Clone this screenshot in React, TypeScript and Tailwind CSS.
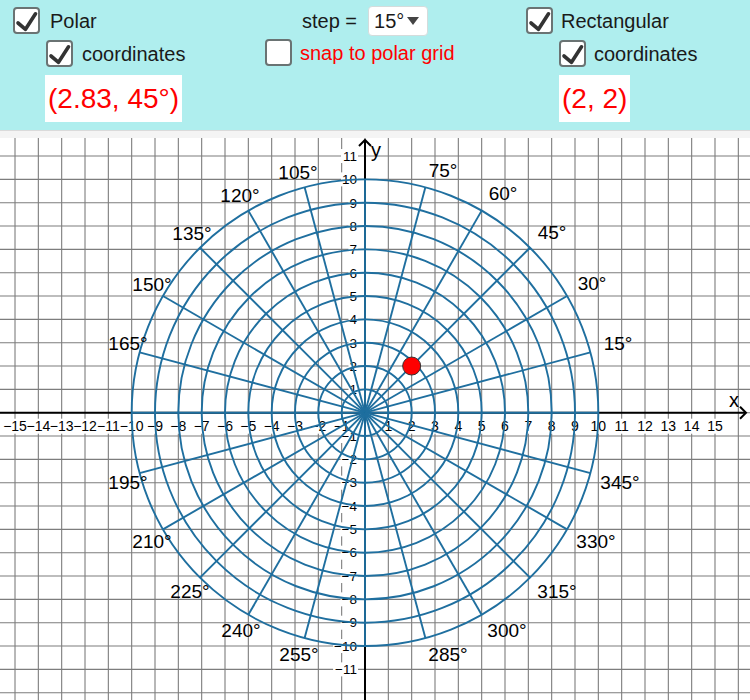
import React from 'react';

const OX = 365;
const OY = 274.7;
const U = 23.333;
const BLUE = '#1f6f9f';

const angleLabels: [string, number, number][] = [
    ['15°', 618, 343],
    ['30°', 592, 283],
    ['45°', 552, 232],
    ['60°', 503, 193],
    ['75°', 443, 170],
    ['105°', 298, 172],
    ['120°', 240, 195],
    ['135°', 192, 233],
    ['150°', 152, 284],
    ['165°', 128, 343],
    ['195°', 128, 482],
    ['210°', 152, 541],
    ['225°', 190, 591],
    ['240°', 241, 630],
    ['255°', 299, 654],
    ['285°', 448, 654],
    ['300°', 507, 630],
    ['315°', 557, 591],
    ['330°', 596, 541],
    ['345°', 620, 482]
];

function range(a: number, b: number) {
    const out: number[] = [];
    for (let i = a; i <= b; i++) out.push(i);
    return out;
}

function numLabel(k: number) {
    return k < 0 ? `\u2212${-k}` : `${k}`;
}

function labelWidth(k: number, size: number) {
    const digits = String(Math.abs(k)).length;
    return (digits * 0.556 + (k < 0 ? 0.584 : 0)) * size;
}

function Checkbox({ checked }: { checked: boolean }) {
    return (
        <span className="flex h-[27px] w-[27px] shrink-0 items-center justify-center rounded-[4px] border-2 border-[#6a7373] bg-white">
            {checked ? (
                <svg width="23" height="23" viewBox="0 0 23 23">
                    <path d="M3 14 L10.5 20.3 L20.5 4.8" fill="none" stroke="#333" strokeWidth={3.6} strokeLinecap="round" strokeLinejoin="round" />
                </svg>
            ) : null}
        </span>
    );
}

function Graph() {
    const xs = range(-16, 16);
    const ys = range(-12, 12);
    const xTicks = range(-15, 15).filter((k) => k !== 0);
    const yTicks = range(-11, 11).filter((k) => k !== 0);
    return (
        <svg width="750" height="562" className="block">
            <rect x="0" y="0" width="750" height="562" fill="#fff" />
            {xs.map((k) => (
                <line key={`gx${k}`} x1={OX + k * U} y1={0} x2={OX + k * U} y2={562} stroke="#7d7d7d" strokeWidth={1.1} />
            ))}
            {ys.map((k) => (
                <line key={`gy${k}`} x1={0} y1={OY - k * U} x2={750} y2={OY - k * U} stroke="#7d7d7d" strokeWidth={1.1} />
            ))}
            {xTicks.map((k) => {
                const w = labelWidth(k, 14);
                return <rect key={`bx${k}`} x={OX + k * U - w / 2 - 1} y={OY + 6} width={w + 2} height={15} fill="#fff" />;
            })}
            {yTicks.map((k) => {
                const w = labelWidth(k, 13.5);
                return <rect key={`by${k}`} x={OX - 8 - w - 1} y={OY - k * U - 7} width={w + 2} height={14} fill="#fff" />;
            })}

            <line x1={0} y1={OY} x2={746} y2={OY} stroke="#000" strokeWidth={2} />
            <path d={`M740 ${OY - 6} L746 ${OY} L740 ${OY + 6}`} fill="none" stroke="#000" strokeWidth={2} />
            <line x1={OX} y1={562} x2={OX} y2={2} stroke="#000" strokeWidth={2} />
            <path d={`M${OX - 6} 8 L${OX} 2 L${OX + 6} 8`} fill="none" stroke="#000" strokeWidth={2} />

            {xTicks.map((k) => (
                <text key={`tx${k}`} x={OX + k * U} y={OY + 18} textAnchor="middle" fontSize="14" fill="#000">
                    {numLabel(k)}
                </text>
            ))}
            {yTicks.map((k) => (
                <text key={`ty${k}`} x={OX - 8} y={OY - k * U + 4.8} textAnchor="end" fontSize="13.5" fill="#000">
                    {numLabel(k)}
                </text>
            ))}
            <text x={371} y={19} fontSize="20" fill="#000">y</text>
            <text x={729} y={268.5} fontSize="20" fill="#000">x</text>

            {range(1, 10).map((k) => (
                <circle key={`c${k}`} cx={OX} cy={OY} r={k * U} fill="none" stroke={BLUE} strokeWidth={1.9} />
            ))}
            {range(0, 23).map((i) => {
                const a = (i * 15 * Math.PI) / 180;
                return (
                    <line
                        key={`r${i}`}
                        x1={OX}
                        y1={OY}
                        x2={OX + 10 * U * Math.cos(a)}
                        y2={OY - 10 * U * Math.sin(a)}
                        stroke={BLUE}
                        strokeWidth={1.9}
                    />
                );
            })}

            <circle cx={OX + 2 * U} cy={OY - 2 * U} r={9} fill="#ff0000" stroke="#333" strokeWidth={1} />

            {angleLabels.map(([t, x, y]) => (
                <text key={t} x={x} y={y - 138 + 7} textAnchor="middle" fontSize="19" fill="#000">
                    {t}
                </text>
            ))}
        </svg>
    );
}

export default function App() {
    return (
        <div className="h-[700px] w-[750px] overflow-hidden bg-white font-['Liberation_Sans',Arial,sans-serif] text-[#1a1a1a]">
            <div className="flex h-[130px] bg-[#afeeee]">
                <div className="w-[265px] pl-[13px]">
                    <div className="mt-[7px] flex h-[27px] items-center gap-[10px]">
                        <Checkbox checked />
                        <span className="text-[20px]">Polar</span>
                    </div>
                    <div className="ml-[33px] mt-[6px] flex h-[27px] items-center gap-[9px]">
                        <Checkbox checked />
                        <span className="text-[20px]">coordinates</span>
                    </div>
                    <div className="ml-[32px] mt-[8px] inline-flex h-[47px] items-center bg-white px-[3px] text-[28px] text-[#ff0000]">
                        (2.83, 45°)
                    </div>
                </div>

                <div className="w-[261px]">
                    <div className="mt-[6px] flex h-[30px] items-center">
                        <span className="ml-[37px] text-[20px]">step =</span>
                        <div className="ml-[11px] flex h-[30px] w-[60px] items-center rounded-[4px] border border-[#d4dcdc] bg-white pl-[5px]">
                            <span className="text-[20px]">15°</span>
                            <svg width="12" height="8" viewBox="0 0 12 8" className="ml-[3px]">
                                <path d="M0 0 L12 0 L6 8 Z" fill="#444" />
                            </svg>
                        </div>
                    </div>
                    <div className="mt-[3px] flex h-[27px] items-center gap-[8px]">
                        <Checkbox checked={false} />
                        <span className="text-[20px] text-[#ff0000]">snap to polar grid</span>
                    </div>
                </div>

                <div className="flex-1">
                    <div className="mt-[7px] flex h-[27px] items-center gap-[8px]">
                        <Checkbox checked />
                        <span className="text-[20px]">Rectangular</span>
                    </div>
                    <div className="ml-[33px] mt-[6px] flex h-[27px] items-center gap-[8px]">
                        <Checkbox checked />
                        <span className="text-[20px]">coordinates</span>
                    </div>
                    <div className="ml-[33px] mt-[8px] inline-flex h-[47px] items-center bg-white px-[3px] text-[28px] text-[#ff0000]">
                        (2, 2)
                    </div>
                </div>
            </div>
            <div className="h-[8px] border-t border-[#dadada] bg-[#f4f4f4]" />
            <Graph />
        </div>
    );
}
